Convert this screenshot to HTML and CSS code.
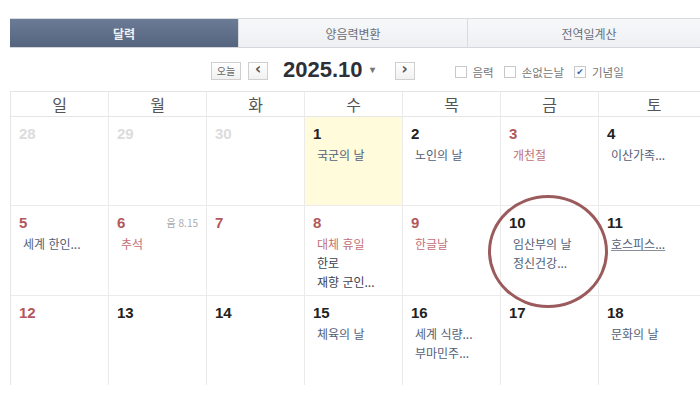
FILE: index.html
```html
<!DOCTYPE html>
<html lang="ko">
<head>
<meta charset="utf-8">
<link rel="stylesheet" href="styles.css">
</head>
<body>
<div class="wrap">
  <div class="tabs">
    <div class="tab active">달력</div>
    <div class="tab">양음력변환</div>
    <div class="tab">전역일계산</div>
  </div>
  <div class="toolbar">
    <span class="btn today">오늘</span>
    <span class="btn arrow">&#8249;</span>
    <span class="title">2025.10<span class="caret">&#9662;</span></span>
    <span class="btn arrow">&#8250;</span>
    <span class="opts">
      <label class="opt"><span class="cb"></span>음력</label>
      <label class="opt"><span class="cb"></span>손없는날</label>
      <label class="opt"><span class="cb checked">&#10004;</span>기념일</label>
    </span>
  </div>
  <div class="cal">
    <div class="dow">일</div><div class="dow">월</div><div class="dow">화</div><div class="dow">수</div><div class="dow">목</div><div class="dow">금</div><div class="dow">토</div>

    <div class="cell"><div class="num prev">28</div></div>
    <div class="cell"><div class="num prev">29</div></div>
    <div class="cell"><div class="num prev">30</div></div>
    <div class="cell today-cell"><div class="num">1</div><div class="ev">국군의 날</div></div>
    <div class="cell"><div class="num">2</div><div class="ev">노인의 날</div></div>
    <div class="cell"><div class="num red">3</div><div class="ev hol">개천절</div></div>
    <div class="cell"><div class="num">4</div><div class="ev">이산가족...</div></div>

    <div class="cell"><div class="num red">5</div><div class="ev">세계 한인...</div></div>
    <div class="cell"><div class="numrow"><div class="num red">6</div><span class="lunar">음 8.15</span></div><div class="ev hol">추석</div></div>
    <div class="cell"><div class="num red">7</div></div>
    <div class="cell"><div class="num red">8</div><div class="ev hol">대체 휴일</div><div class="ev dark">한로</div><div class="ev dark">재향 군인...</div></div>
    <div class="cell"><div class="num red">9</div><div class="ev hol">한글날</div></div>
    <div class="cell"><div class="num">10</div><div class="ev">임산부의 날</div><div class="ev">정신건강...</div></div>
    <div class="cell"><div class="num">11</div><div class="ev link">호스피스...</div></div>

    <div class="cell last"><div class="num red">12</div></div>
    <div class="cell last"><div class="num">13</div></div>
    <div class="cell last"><div class="num">14</div></div>
    <div class="cell last"><div class="num">15</div><div class="ev">체육의 날</div></div>
    <div class="cell last"><div class="num">16</div><div class="ev">세계 식량...</div><div class="ev">부마민주...</div></div>
    <div class="cell last"><div class="num">17</div></div>
    <div class="cell last"><div class="num">18</div><div class="ev">문화의 날</div></div>

    <div class="circle"></div>
  </div>
</div>
</body>
</html>
```

FILE: styles.css
```css
html, body {
  margin: 0;
  padding: 0;
  background: #ffffff;
  overflow: hidden;
}
body {
  width: 700px;
  height: 400px;
  font-family: "Noto Sans CJK KR", "Noto Sans", sans-serif;
  color: #333;
}
.wrap {
  margin: 18px 0 0 10px;
  width: 700px;
}
.tabs {
  display: grid;
  grid-template-columns: 228px 229px 1fr;
  height: 30px;
  border-top: 1px solid #d9dbe0;
  border-bottom: 1px solid #d3d6dc;
  box-sizing: border-box;
}
.tab {
  display: flex;
  align-items: center;
  justify-content: center;
  font-size: 12px;
  color: #6b6f78;
  background: linear-gradient(#f7f8fa, #eef0f3);
  border-left: 1px solid #d9dbe0;
}
.tab.active {
  background: linear-gradient(#6b7a95, #56657f);
  color: #eef1f6;
  font-weight: bold;
  border-left: none;
}
.toolbar {
  height: 44px;
  display: flex;
  align-items: center;
  padding-left: 201px;
  box-sizing: border-box;
  border-bottom: 1px solid #e4e4e4;
}
.btn {
  display: inline-flex;
  align-items: center;
  justify-content: center;
  height: 18px;
  box-sizing: border-box;
  border: 1px solid #cfcfcf;
  background: linear-gradient(#ffffff, #f1f1f1);
  color: #666;
  font-size: 10px;
}
.today {
  width: 30px;
  margin-top: 2px;
}
.arrow {
  width: 20px;
  margin-left: 7px;
  margin-top: 2px;
  font-size: 15px;
  font-family: "DejaVu Sans", sans-serif;
  font-weight: bold;
  color: #555;
  line-height: 1;
  padding-bottom: 2px;
}
.title {
  margin-left: 15px;
  margin-right: 13px;
  font-family: "Liberation Sans", "Noto Sans", sans-serif;
  font-weight: bold;
  font-size: 22px;
  color: #2e3038;
}
.caret {
  font-size: 10px;
  color: #777;
  margin-left: 7px;
  vertical-align: 4px;
}
.opts {
  display: flex;
  align-items: center;
  margin-left: 40px;
  margin-top: 4px;
}
.opt {
  display: flex;
  align-items: center;
  font-size: 11.5px;
  color: #777;
  margin-right: 10px;
}
.cb {
  width: 12px;
  height: 12px;
  box-sizing: border-box;
  border: 1px solid #c8c8c8;
  background: #fff;
  margin-right: 6px;
  display: inline-flex;
  align-items: center;
  justify-content: center;
  font-size: 9px;
  color: #3a63ad;
  font-family: "DejaVu Sans", sans-serif;
}
.cal {
  position: relative;
  display: grid;
  grid-template-columns: repeat(6, 98px) 1fr;
  grid-template-rows: 25px 89px 90px 89px;
  border-left: 1px solid #e6e6e6;
}
.dow {
  display: flex;
  align-items: center;
  justify-content: center;
  font-size: 16px;
  color: #555;
  border-right: 1px solid #ebebeb;
  border-bottom: 1px solid #e6e6e6;
}
.cell {
  border-right: 1px solid #ebebeb;
  border-bottom: 1px solid #ebebeb;
  padding: 8px 0 0 8px;
  box-sizing: border-box;
}
.cell.last {
  border-bottom: none;
}
.today-cell {
  background: #fffbdb;
}
.numrow {
  display: flex;
  justify-content: space-between;
  align-items: flex-start;
  padding-right: 8px;
}
.num {
  font-family: "Liberation Sans", "Noto Sans", sans-serif;
  font-weight: bold;
  font-size: 15px;
  line-height: 18px;
  color: #222;
  height: 20px;
}
.num.prev {
  color: #dcdcdc;
}
.num.red {
  color: #b2585c;
}
.lunar {
  font-size: 10px;
  color: #aaa;
  margin-top: 1px;
}
.ev {
  font-size: 12px;
  line-height: 19px;
  color: #526077;
  padding-left: 4px;
  white-space: nowrap;
}
.ev.hol {
  color: #c27077;
}
.ev.dark {
  color: #3c4250;
}
.ev.link {
  text-decoration: underline;
  text-decoration-color: #8a8f99;
}
.circle {
  position: absolute;
  left: 477px;
  top: 103px;
  width: 120px;
  height: 113px;
  border: 3px solid #9b5b5d;
  border-radius: 50%;
  box-sizing: border-box;
  pointer-events: none;
}
```
